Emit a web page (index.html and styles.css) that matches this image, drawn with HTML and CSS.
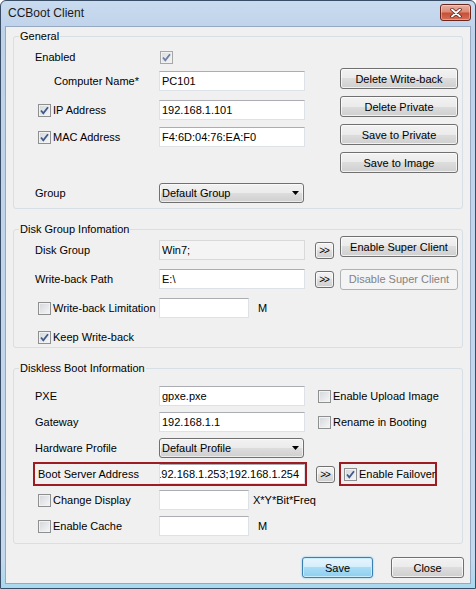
FILE: index.html
```html
<!DOCTYPE html>
<html lang="en">
<head>
    <meta charset="UTF-8">
    <title>CCBoot Client</title>
    <link rel="stylesheet" href="styles.css">
</head>
<body>
    <div class="window">
        <div class="titlebar">
            <span class="title">CCBoot Client</span>
            <button class="close">
                <svg width="14" height="10" viewBox="0 0 14 10">
                    <path d="M3 1.5 L11 8.5 M11 1.5 L3 8.5" stroke="#5a1d12" stroke-width="3.4" stroke-linecap="round" fill="none"/>
                    <path d="M3 1.5 L11 8.5 M11 1.5 L3 8.5" stroke="#fff" stroke-width="1.9" stroke-linecap="round" fill="none"/>
                </svg>
            </button>
        </div>

        <div class="client">
            <!-- General -->
            <fieldset class="group general">
                <legend>General</legend>
                <div class="general-body">
                    <div class="fields">
                        <span class="label">Enabled</span>
                        <span class="check on dim"><svg viewBox="0 0 11 11"><path d="M2 5.5 L4.3 8.3 L9 2.2" /></svg></span>

                        <span class="label indent">Computer Name*</span>
                        <input class="text" type="text" value="PC101">

                        <label class="opt"><span class="check on"><svg viewBox="0 0 11 11"><path d="M2 5.5 L4.3 8.3 L9 2.2" /></svg></span>IP Address</label>
                        <input class="text" type="text" value="192.168.1.101">

                        <label class="opt"><span class="check on"><svg viewBox="0 0 11 11"><path d="M2 5.5 L4.3 8.3 L9 2.2" /></svg></span>MAC Address</label>
                        <input class="text" type="text" value="F4:6D:04:76:EA:F0">

                        <span class="label last">Group</span>
                        <div class="combo last">
                            <span>Default Group</span>
                            <svg class="arrow" width="7" height="4" viewBox="0 0 7 4"><path d="M0 0 H7 L3.5 4 Z"/></svg>
                        </div>
                    </div>
                    <div class="side">
                        <button class="btn">Delete Write-back</button>
                        <button class="btn">Delete Private</button>
                        <button class="btn">Save to Private</button>
                        <button class="btn">Save to Image</button>
                    </div>
                </div>
            </fieldset>

            <!-- Disk group -->
            <fieldset class="group disk">
                <legend>Disk Group Infomation</legend>
                <div class="grid disk-body">
                    <span class="label">Disk Group</span>
                    <input class="text ro" type="text" value="Win7;" readonly>
                    <button class="btn more">&gt;&gt;</button>
                    <button class="btn lift">Enable Super Client</button>

                    <span class="label">Write-back Path</span>
                    <input class="text" type="text" value="E:\">
                    <button class="btn more">&gt;&gt;</button>
                    <button class="btn" disabled>Disable Super Client</button>

                    <label class="opt"><span class="check"></span>Write-back Limitation</label>
                    <div class="pair"><input class="text short" type="text"><span class="unit">M</span></div>
                    <span></span><span></span>

                    <label class="opt"><span class="check on"><svg viewBox="0 0 11 11"><path d="M2 5.5 L4.3 8.3 L9 2.2" /></svg></span>Keep Write-back</label>
                </div>
            </fieldset>

            <!-- Diskless boot -->
            <fieldset class="group boot">
                <legend>Diskless Boot Information</legend>
                <div class="grid boot-body">
                    <span class="label">PXE</span>
                    <input class="text" type="text" value="gpxe.pxe">
                    <label class="opt right"><span class="check"></span>Enable Upload Image</label>

                    <span class="label">Gateway</span>
                    <input class="text" type="text" value="192.168.1.1">
                    <label class="opt right"><span class="check"></span>Rename in Booting</label>

                    <span class="label">Hardware Profile</span>
                    <div class="combo">
                        <span>Default Profile</span>
                        <svg class="arrow" width="7" height="4" viewBox="0 0 7 4"><path d="M0 0 H7 L3.5 4 Z"/></svg>
                    </div>
                    <span></span><span></span>

                    <div class="mark server">
                        <span class="label">Boot Server Address</span>
                        <div class="text scroll"><span>192.168.1.253;192.168.1.254</span></div>
                    </div>
                    <button class="btn more boot-more">&gt;&gt;</button>
                    <label class="opt mark failover"><span class="check on"><svg viewBox="0 0 11 11"><path d="M2 5.5 L4.3 8.3 L9 2.2" /></svg></span>Enable Failover</label>

                    <label class="opt"><span class="check"></span>Change Display</label>
                    <div class="pair"><input class="text short" type="text"><span class="hint">X*Y*Bit*Freq</span></div>
                    <span></span><span></span>

                    <label class="opt"><span class="check"></span>Enable Cache</label>
                    <div class="pair"><input class="text short" type="text"><span class="unit">M</span></div>
                </div>
            </fieldset>

            <div class="footer">
                <button class="btn default save">Save</button>
                <button class="btn close-btn">Close</button>
            </div>
        </div>
    </div>
</body>
</html>
```

FILE: styles.css
```css
body {
    margin: 0;
    font-family: "Liberation Sans", Arial, sans-serif;
    font-size: 11px;
    color: #000;
}

/* window frame */
.window {
    width: 476px;
    height: 589px;
    box-sizing: border-box;
    border: 1px solid #3a4d66;
    border-radius: 6px 6px 0 0;
    padding: 0 4px 4px;
    background: linear-gradient(#c9dbef, #bed2ea 30px, #c4d8ee 560px, #a9d8ee);
    display: flex;
    flex-direction: column;
}
.titlebar {
    height: 25px;
    display: flex;
    justify-content: space-between;
}
.title {
    font-size: 12px;
    padding-left: 3px;
    line-height: 25px;
    color: #1a1a1a;
}
.close {
    width: 31px;
    height: 17px;
    margin-top: 3px;
    padding: 0;
    border: 1px solid #6b271b;
    border-radius: 3px;
    background: linear-gradient(#eab0a2, #dc8b77 45%, #c94f36 55%, #d5705a);
    box-shadow: inset 0 0 0 1px rgba(255, 255, 255, 0.35);
    display: flex;
    align-items: center;
    justify-content: center;
}
.client {
    flex: 1;
    background: #f0f0f0;
    border: 1px solid #97a9c0;
}

/* group boxes */
.group {
    margin: 3px 7px 0;
    padding: 0 0 5px 5px;
    border: 1px solid #d5dfe5;
    border-radius: 3px;
}
.group legend {
    padding: 0 1px;
    line-height: 13px;
}
.disk {
    margin-top: 14px;
    padding-bottom: 0;
}
.boot {
    margin-top: 14px;
    padding-bottom: 7px;
}

.general-body {
    display: flex;
    margin-top: 4px;
    padding-left: 16px;
}
.fields {
    display: grid;
    grid-template-columns: 124px 146px;
    grid-template-rows: 20px 28px 30px 24px 54px;
    align-items: center;
}
.fields .last {
    align-self: end;
}
.fields .last.label {
    line-height: 20px;
}
.side {
    margin-left: 35px;
    margin-top: 21px;
    display: flex;
    flex-direction: column;
    gap: 7px;
    width: 118px;
}

.grid {
    display: grid;
    grid-template-columns: 124px 146px 35px 118px;
    grid-auto-rows: 20px;
    align-items: center;
    padding-left: 16px;
}
.disk-body {
    margin-top: 4px;
    row-gap: 9px;
}
.boot-body {
    margin-top: 11px;
    row-gap: 6px;
}

/* labels and check boxes */
.indent {
    padding-left: 19px;
}
.opt {
    display: flex;
    align-items: center;
    gap: 2px;
    margin-left: 3px;
    white-space: nowrap;
}
.opt.right {
    grid-column: 3 / 5;
    margin-left: 13px;
}
.check {
    width: 13px;
    height: 13px;
    box-sizing: border-box;
    border: 1px solid #8e8f8f;
    background: linear-gradient(135deg, #d3d6da, #f7f7f8);
    box-shadow: inset 0 0 0 1px #f2f2f2;
    display: inline-flex;
    align-items: center;
    justify-content: center;
    flex-shrink: 0;
}
.check svg {
    width: 11px;
    height: 11px;
}
.check svg path {
    fill: none;
    stroke: #3f5a8a;
    stroke-width: 1.8;
}
.check.dim {
    margin-left: 1px;
    opacity: 0.75;
}

/* inputs */
.text {
    box-sizing: border-box;
    width: 146px;
    height: 20px;
    margin: 0;
    padding: 0 2px;
    border: 1px solid #dde2e8;
    border-top-color: #abadb3;
    background: #fff;
    font: 11px "Liberation Sans", Arial, sans-serif;
    color: #000;
    outline: none;
}
.text.ro {
    background: #f4f4f4;
    border-color: #d9d9d9;
}
.text.short {
    width: 90px;
}
.pair {
    display: flex;
    align-items: center;
}
.unit {
    margin-left: 9px;
}
.hint {
    margin-left: 4px;
    white-space: nowrap;
}
.scroll {
    display: flex;
    align-items: center;
    justify-content: flex-end;
    overflow: hidden;
    white-space: nowrap;
    padding-right: 5px;
}

.combo {
    box-sizing: border-box;
    width: 145px;
    height: 20px;
    border: 1px solid #707070;
    border-radius: 3px;
    background: linear-gradient(#f2f2f2, #ebebeb 50%, #dddddd 50%, #cfcfcf);
    box-shadow: inset 0 0 0 1px rgba(255, 255, 255, 0.6);
    display: flex;
    align-items: center;
    padding-left: 2px;
}
.combo .arrow {
    margin-left: auto;
    margin-right: 4px;
}

/* highlighted fields */
.mark {
    border: 2px solid #9c1c22;
}
.server {
    grid-column: 1 / 3;
    margin: -2px -2px;
    display: grid;
    grid-template-columns: 124px 146px;
    align-items: center;
}
.server .label {
    padding-left: 3px;
}
.failover {
    box-sizing: border-box;
    width: 98px;
    height: 24px;
    margin: 0 0 0 -1px;
    padding-left: 3px;
    justify-self: start;
}

/* buttons */
.btn {
    height: 21px;
    padding: 0;
    border: 1px solid #707070;
    border-radius: 3px;
    background: linear-gradient(#f2f2f2, #ebebeb 50%, #dddddd 50%, #cfcfcf);
    box-shadow: inset 0 0 0 1px rgba(255, 255, 255, 0.7);
    font: 11px "Liberation Sans", Arial, sans-serif;
    color: #000;
}
.btn.lift {
    align-self: start;
    margin-top: -4px;
}
.btn:disabled {
    border-color: #adb2b5;
    background: #f4f4f4;
    box-shadow: none;
    color: #838383;
}
.btn.more {
    width: 19px;
    height: 17px;
    margin-left: 10px;
    font-size: 10px;
    letter-spacing: -1px;
    padding-right: 1px;
}
.btn.boot-more {
    margin-left: 11px;
}

.footer {
    display: flex;
    justify-content: flex-end;
    gap: 18px;
    margin-top: 13px;
    padding-right: 6px;
}
.save {
    width: 71px;
}
.close-btn {
    width: 73px;
}
.btn.default {
    border-color: #3c7fb1;
    background: linear-gradient(#e6f5fd, #d2eefc 50%, #a9dcf6 50%, #8ecfef);
    box-shadow: inset 0 0 0 1px #c8ecfb, 0 0 2px #6fc4f0;
}
```
